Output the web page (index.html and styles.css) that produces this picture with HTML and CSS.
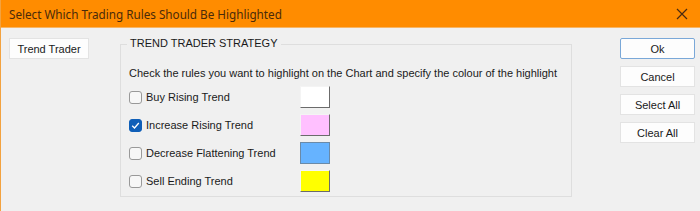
FILE: index.html
```html
<!DOCTYPE html>
<html>
<head>
<meta charset="utf-8">
<link rel="stylesheet" href="styles.css">
</head>
<body>
<div class="window">
  <div class="titlebar">
    <span class="title">Select Which Trading Rules Should Be Highlighted</span>
    <span class="close">
      <svg width="12" height="12" viewBox="0 0 12 12"><path d="M1 1 L11 11 M11 1 L1 11" stroke="#4a2a10" stroke-width="1.2" fill="none"/></svg>
    </span>
  </div>
  <div class="content">
    <div class="leftcol">
      <div class="btn tab">Trend Trader</div>
    </div>
    <div class="group">
      <div class="legend">TREND TRADER STRATEGY</div>
      <div class="intro">Check the rules you want to highlight on the Chart and specify the colour of the highlight</div>
      <div class="rules">
        <div class="rule">
          <span class="cb"></span><span class="label">Buy Rising Trend</span>
          <span class="swatch sw-white"></span>
        </div>
        <div class="rule">
          <span class="cb checked"><svg width="11" height="11" viewBox="0 0 11 11"><path d="M2.2 5.8 L4.5 8 L8.8 3" stroke="#fff" stroke-width="1.3" fill="none"/></svg></span><span class="label">Increase Rising Trend</span>
          <span class="swatch sw-pink"></span>
        </div>
        <div class="rule">
          <span class="cb"></span><span class="label">Decrease Flattening Trend</span>
          <span class="swatch sw-blue"></span>
        </div>
        <div class="rule">
          <span class="cb"></span><span class="label">Sell Ending Trend</span>
          <span class="swatch sw-yellow"></span>
        </div>
      </div>
    </div>
    <div class="rightcol">
      <div class="btn action ok">Ok</div>
      <div class="btn action">Cancel</div>
      <div class="btn action">Select All</div>
      <div class="btn action">Clear All</div>
    </div>
  </div>
</div>
</body>
</html>
```

FILE: styles.css
```css
html, body {
  margin: 0;
  padding: 0;
  width: 700px;
  height: 211px;
  overflow: hidden;
  background: #f0f0f0;
}
.window {
  width: 700px;
  height: 211px;
  display: flex;
  flex-direction: column;
  border-left: 1px solid #f3a23f;
  box-sizing: border-box;
}
.titlebar {
  height: 27px;
  background: #ff8c00;
  display: flex;
  align-items: center;
  justify-content: space-between;
  padding-left: 8px;
  padding-right: 10px;
  border-bottom: 1px solid #f7b565;
  flex-shrink: 0;
}
.title {
  font-family: "Segoe UI", "Noto Sans", "Open Sans", sans-serif;
  font-size: 11.7px;
  color: #4a2a0a;
}
.close {
  display: flex;
  align-items: center;
  width: 14px;
  height: 14px;
}
.content {
  display: flex;
  flex: 1;
  font-family: "Liberation Sans", Arial, sans-serif;
  font-size: 11px;
  color: #1a1a1a;
  padding-top: 10px;
}
.leftcol {
  width: 119px;
  padding-left: 8px;
  box-sizing: border-box;
  flex-shrink: 0;
}
.btn {
  background: #fdfdfd;
  border: 1px solid #e3e3e3;
  box-sizing: border-box;
  display: flex;
  align-items: center;
  justify-content: center;
  height: 21px;
}
.tab {
  width: 80px;
}
.group {
  width: 452px;
  height: 153px;
  margin-top: 6px;
  border: 1px solid #dedede;
  box-sizing: border-box;
  position: relative;
  padding-left: 8px;
  flex-shrink: 0;
}
.legend {
  position: absolute;
  top: -8px;
  left: 6px;
  padding: 0 3px;
  background: #f0f0f0;
  color: #1a1a1a;
}
.intro {
  margin-top: 21px;
  height: 14px;
  line-height: 14px;
  white-space: nowrap;
}
.rules {
  margin-top: 6px;
  display: flex;
  flex-direction: column;
  gap: 6px;
}
.rule {
  display: flex;
  align-items: center;
  height: 22px;
}
.cb {
  width: 13px;
  height: 13px;
  border: 1px solid #999999;
  border-radius: 3px;
  background: #f7f7f7;
  box-sizing: border-box;
  display: flex;
  align-items: center;
  justify-content: center;
}
.cb.checked {
  background: #0f5fb8;
  border-color: #0f5fb8;
}
.label {
  margin-left: 4px;
  width: 154px;
}
.swatch {
  width: 30px;
  height: 22px;
  box-sizing: border-box;
  border-top: 1px solid #f4f4f4;
  border-left: 1px solid #f4f4f4;
  border-right: 1px solid #6b6b6b;
  border-bottom: 1px solid #6b6b6b;
}
.sw-white { background: #ffffff; }
.sw-pink { background: #ffc0ff; }
.sw-blue { background: #66b3ff; border: 1px solid #6a8aa8; }
.sw-yellow { background: #ffff00; }
.rightcol {
  margin-left: 48px;
  display: flex;
  flex-direction: column;
  gap: 7px;
}
.action {
  width: 75px;
}
.ok {
  border: 1px solid #7aa8d8;
  border-radius: 2px;
}
```
